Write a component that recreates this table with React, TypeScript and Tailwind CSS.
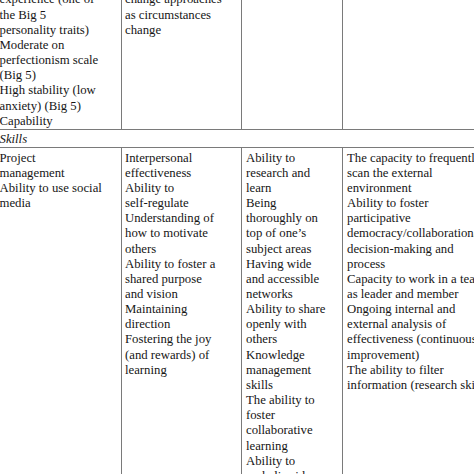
import React from "react";

const Lines = ({ lines }: { lines: string[] }) => (
  <>
    {lines.map((l, i) => (
      <div key={i} className="whitespace-nowrap">
        {l}
      </div>
    ))}
  </>
);

export default function App() {
  const r1c1 = [
    "experience (one of",
    "the Big 5",
    "personality traits)",
    "Moderate on",
    "perfectionism scale",
    "(Big 5)",
    "High stability (low",
    "anxiety) (Big 5)",
    "Capability",
  ];
  const r1c2 = ["change approaches", "as circumstances", "change"];
  const r3c1 = ["Project", "management", "Ability to use social", "media"];
  const r3c2 = [
    "Interpersonal",
    "effectiveness",
    "Ability to",
    "self-regulate",
    "Understanding of",
    "how to motivate",
    "others",
    "Ability to foster a",
    "shared purpose",
    "and vision",
    "Maintaining",
    "direction",
    "Fostering the joy",
    "(and rewards) of",
    "learning",
  ];
  const r3c3 = [
    "Ability to",
    "research and",
    "learn",
    "Being",
    "thoroughly on",
    "top of one\u2019s",
    "subject areas",
    "Having wide",
    "and accessible",
    "networks",
    "Ability to share",
    "openly with",
    "others",
    "Knowledge",
    "management",
    "skills",
    "The ability to",
    "foster",
    "collaborative",
    "learning",
    "Ability to",
    "verbalise ideas",
  ];
  const r3c4 = [
    "The capacity to frequently",
    "scan the external",
    "environment",
    "Ability to foster",
    "participative",
    "democracy/collaborational",
    "decision-making and",
    "process",
    "Capacity to work in a team",
    "as leader and member",
    "Ongoing internal and",
    "external analysis of",
    "effectiveness (continuous",
    "improvement)",
    "The ability to filter",
    "information (research skills)",
  ];

  return (
    <div className="w-[474px] h-[474px] overflow-hidden bg-white">
      <div className="ml-[-5px] mt-[-7.6px] w-[640px] font-['Liberation_Serif',serif] text-[12.75px] leading-[15.15px] text-[#161616]">
        <div className="grid grid-cols-[127px_120px_101px_292px] border-b border-[#7a7a7a]">
          <div className="border-r border-[#7a7a7a] pl-[4.5px]">
            <Lines lines={r1c1} />
          </div>
          <div className="border-r border-[#7a7a7a] pl-[3px]">
            <Lines lines={r1c2} />
          </div>
          <div className="border-r border-[#7a7a7a] pl-[4px]"></div>
          <div className="pl-[4px]"></div>
        </div>
        <div className="pt-[2.3px] pl-[4.5px] italic border-b border-[#7a7a7a]">
          Skills
        </div>
        <div className="grid grid-cols-[127px_120px_101px_292px] h-[400px]">
          <div className="border-r border-[#7a7a7a] pl-[4.5px] pt-[2.3px]">
            <Lines lines={r3c1} />
          </div>
          <div className="border-r border-[#7a7a7a] pl-[3px] pt-[2.3px]">
            <Lines lines={r3c2} />
          </div>
          <div className="border-r border-[#7a7a7a] pl-[4px] pt-[2.3px]">
            <Lines lines={r3c3} />
          </div>
          <div className="pl-[4px] pt-[2.3px]">
            <Lines lines={r3c4} />
          </div>
        </div>
      </div>
    </div>
  );
}
